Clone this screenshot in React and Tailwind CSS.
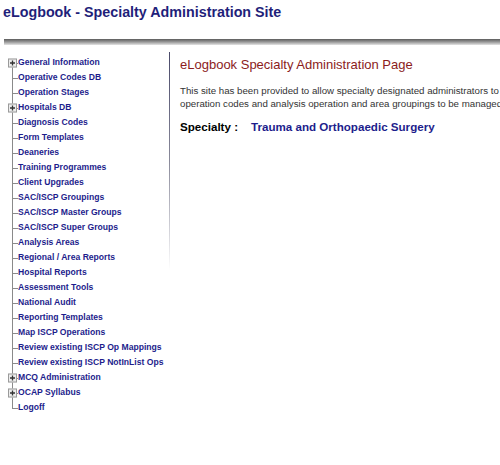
import React from 'react';

// Left tree menu of the admin site. `plus` = collapsed node with children.
const MENU = [
  { label: 'General Information', plus: true },
  { label: 'Operative Codes DB' },
  { label: 'Operation Stages' },
  { label: 'Hospitals DB', plus: true },
  { label: 'Diagnosis Codes' },
  { label: 'Form Templates' },
  { label: 'Deaneries' },
  { label: 'Training Programmes' },
  { label: 'Client Upgrades' },
  { label: 'SAC/ISCP Groupings' },
  { label: 'SAC/ISCP Master Groups' },
  { label: 'SAC/ISCP Super Groups' },
  { label: 'Analysis Areas' },
  { label: 'Regional / Area Reports' },
  { label: 'Hospital Reports' },
  { label: 'Assessment Tools' },
  { label: 'National Audit' },
  { label: 'Reporting Templates' },
  { label: 'Map ISCP Operations' },
  { label: 'Review existing ISCP Op Mappings' },
  { label: 'Review existing ISCP NotInList Ops' },
  { label: 'MCQ Administration', plus: true },
  { label: 'OCAP Syllabus', plus: true },
  { label: 'Logoff' },
];

function PlusBox() {
  return (
    <span className="absolute left-[8px] top-1/2 -translate-y-1/2 w-[9px] h-[9px] border border-[#9a9a9a] bg-[#ececec] flex items-center justify-center">
      <svg width="7" height="7" viewBox="0 0 7 7">
        <path d="M1 3.5h5M3.5 1v5" stroke="#333" strokeWidth="1.3" />
      </svg>
    </span>
  );
}

function TreeRow({ item, first, last }) {
  return (
    <li className="flex items-center h-[15px]">
      <span className="relative w-[18px] h-full shrink-0">
        <span
          className={`absolute left-[12px] w-px bg-[#8a8a8a] ${first ? 'top-1/2' : 'top-0'} ${last ? 'h-1/2' : 'bottom-0'}`}
        />
        <span className="absolute left-[12px] top-1/2 w-[6px] h-px bg-[#8a8a8a]" />
        {item.plus && <PlusBox />}
      </span>
      <a href="#" className="text-[#1d1d8c] font-bold text-[8.6px] leading-none whitespace-nowrap">
        {item.label}
      </a>
    </li>
  );
}

export default function App() {
  return (
    <div className="w-[500px] h-[465px] overflow-hidden bg-white font-['Liberation_Sans',Arial,sans-serif]">
      <div className="w-[760px]">
        {/* Header */}
        <h1 className="pl-[3px] pt-[3px] h-[39px] text-[14.3px] leading-[18px] font-bold text-[#1f1f7a]">
          eLogbook - Specialty Administration Site
        </h1>
        <div className="ml-[4px] h-[6px] bg-gradient-to-b from-[#5c5c5c] via-[#9a9a9a] to-[#e4e4e4]" />

        <div className="flex pt-[7px]">
          {/* Tree menu */}
          <ul className="w-[169px] shrink-0 pt-[3px]">
            {MENU.map((item, i) => (
              <TreeRow key={item.label} item={item} first={i === 0} last={i === MENU.length - 1} />
            ))}
          </ul>

          {/* Divider */}
          <div className="w-px h-[218px] shrink-0 bg-gradient-to-b from-[#4a4a6a] via-[#8a8a9a] to-white" />

          {/* Content */}
          <div className="pl-[10px] pt-[5px] w-[560px]">
            <h2 className="text-[13px] leading-[16px] text-[#8b1c1c]">
              eLogbook Specialty Administration Page
            </h2>
            <p className="mt-[11px] text-[9.7px] leading-[13px] text-[#333333] whitespace-nowrap">
              This site has been provided to allow specialty designated administrators to manage their specialty's
              <br />
              operation codes and analysis operation and area groupings to be managed centrally.
            </p>
            <div className="mt-[10px] flex items-center text-[11.6px] font-bold leading-[14px]">
              <span className="text-black w-[71px]">Specialty :</span>
              <span className="text-[#1d1d8c]">Trauma and Orthopaedic Surgery</span>
            </div>
          </div>
        </div>
      </div>
    </div>
  );
}
